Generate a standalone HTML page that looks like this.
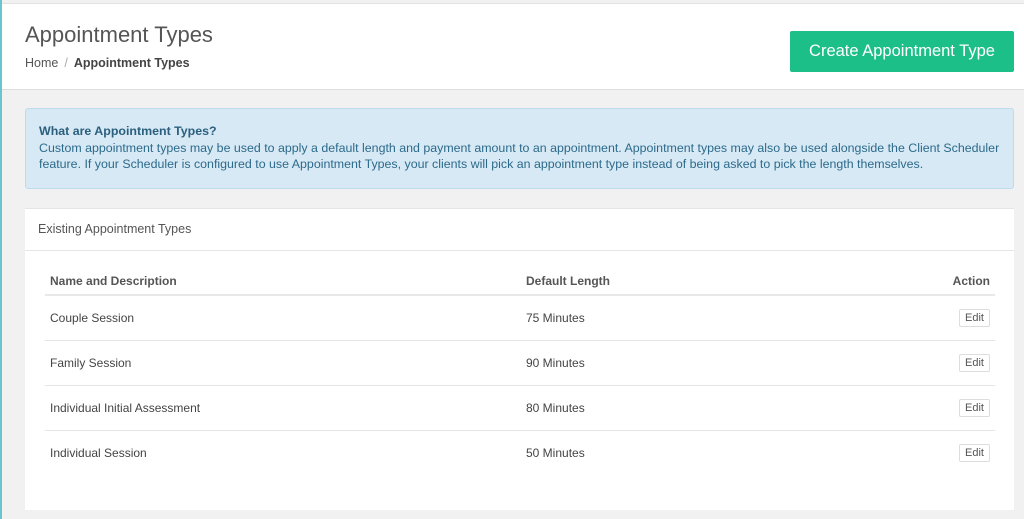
<!DOCTYPE html>
<html><head><style>
*{margin:0;padding:0;box-sizing:border-box}
body{width:1024px;height:519px;overflow:hidden;background:#f1f1f1;font-family:"Liberation Sans",sans-serif;position:relative}
.lb{position:absolute;left:0;top:0;width:2px;height:519px;background:#6cc5cc}
.hdr{position:absolute;left:2px;top:3px;right:0;height:87px;background:#fff;border-top:1px solid #e2e2e2;border-bottom:1px solid #dedede}
h1{position:absolute;left:23px;top:18px;font-weight:normal;font-size:22px;color:#555}
.bc{position:absolute;left:23px;top:52px;font-size:12.5px;color:#555}
.bc b{color:#444}
.bc span{color:#aaa;margin:0 6px}
.btn{position:absolute;left:788px;top:27px;width:224px;height:41px;background:#1dbf88;color:#fff;font-size:16.5px;border-radius:2px;text-align:center;line-height:41px}
.info{position:absolute;left:25px;top:108px;width:989px;height:81px;background:#d6e9f5;border:1px solid #bcdcea;border-radius:3px;color:#2d6a8a;font-size:12.4px;line-height:16.5px;padding:14px 13px}
.info b{color:#2a5f7e}
.pan{position:absolute;left:25px;top:208px;width:989px;height:302px;background:#fff;border-top:1px solid #e5e5e5}
.ph{height:42px;border-bottom:1px solid #e5e5e5;padding:13px 13px;font-size:12.5px;color:#555}
table{position:absolute;left:20px;top:59px;width:950px;border-collapse:collapse;font-size:12px;color:#444}
th{text-align:left;font-weight:bold;color:#555;height:27px;border-bottom:2px solid #e8e8e8;padding:0 5px;vertical-align:middle}
td{height:45px;border-bottom:1px solid #e5e5e5;padding:0 5px}
tr:last-child td{border-bottom:none}
.r{text-align:right}
.e{display:inline-block;border:1px solid #ddd;border-radius:2px;padding:2px 5px;font-size:11px;color:#555}
</style></head><body>
<div class="lb"></div>
<div class="hdr">
<h1>Appointment Types</h1>
<div class="bc">Home<span>/</span><b>Appointment Types</b></div>
<div class="btn">Create Appointment Type</div>
</div>
<div class="info"><b>What are Appointment Types?</b><br>Custom appointment types may be used to apply a default length and payment amount to an appointment. Appointment types may also be used alongside the Client Scheduler feature. If your Scheduler is configured to use Appointment Types, your clients will pick an appointment type instead of being asked to pick the length themselves.</div>
<div class="pan">
<div class="ph">Existing Appointment Types</div>
<table>
<tr><th style="width:476px">Name and Description</th><th>Default Length</th><th class="r">Action</th></tr>
<tr><td>Couple Session</td><td>75 Minutes</td><td class="r"><span class="e">Edit</span></td></tr>
<tr><td>Family Session</td><td>90 Minutes</td><td class="r"><span class="e">Edit</span></td></tr>
<tr><td>Individual Initial Assessment</td><td>80 Minutes</td><td class="r"><span class="e">Edit</span></td></tr>
<tr><td>Individual Session</td><td>50 Minutes</td><td class="r"><span class="e">Edit</span></td></tr>
</table>
</div>
</body></html>
